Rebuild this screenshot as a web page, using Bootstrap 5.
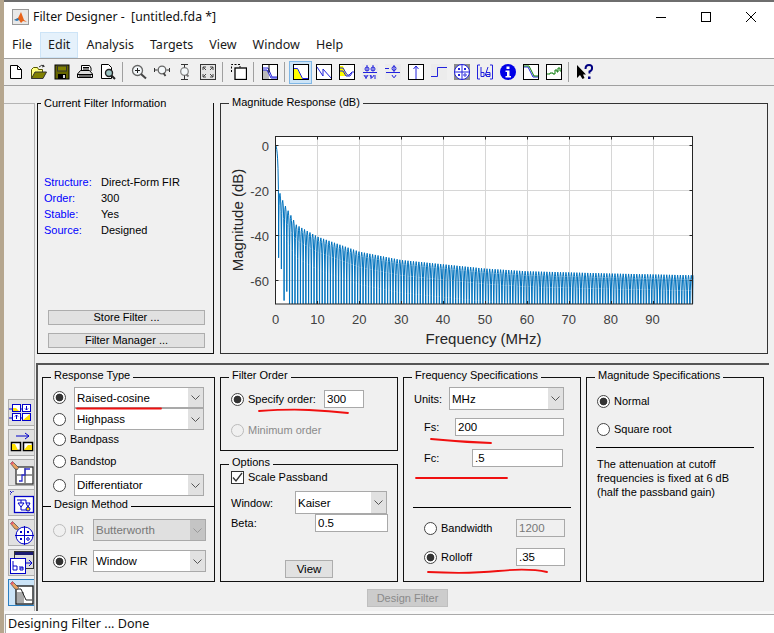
<!DOCTYPE html>
<html lang="en">
<head>
  <meta charset="UTF-8">
  <title>Filter Designer</title>
  <link rel="stylesheet" href="https://cdn.jsdelivr.net/npm/bootstrap@5.3.0/dist/css/bootstrap.min.css">
  <style>
    html, body { margin: 0; height: 633px; overflow: hidden; }
    body { background: #b5a68e; color: #000; font: 11px/14px "Liberation Sans", Arial, sans-serif; position: relative; }

    .fd-win { margin-left: 4px; width: 770px; height: 633px; background: #f0f0f0; }
    .fd-title { height: 32px; flex: none; background: #fff; border-top: 2px solid #6e6e6e; font: 12.3px/16px "Noto Sans", sans-serif; padding-left: 8px; gap: 4px; }
    .fd-title pre { margin: 0; font: inherit; color: #111; }
    .fd-winbtns { margin-left: auto; gap: 29px; padding-right: 15px; }
    .fd-menu { height: 26px; flex: none; background: #fff; font: 12.5px/24px "Noto Sans", sans-serif; color: #1a1a1a; }
    .fd-menu span { padding: 0 7px; height: 26px; border: 1px solid transparent; }
    .fd-menu span.on { background: #e5f1fb; border-color: #cde4f7; }

    .fd-tools { height: 28px; flex: none; border-top: 1px solid #a0a0a0; border-bottom: 1px solid #a0a0a0; }
    .fd-tool { width: 23px; height: 23px; }
    .fd-tool.on { background: #cce4f7; border: 1px solid #7fb7e6; }
    .fd-tool svg, .fd-side svg { display: block; }
    .fd-sep { width: 1px; height: 20px; background: #a0a0a0; margin: 0 4px 0 3px; }

    .fd-body { height: 525px; flex: none; }
    .fd-side { width: 31px; margin-top: 17px; border-top: 1px solid #b4b4b4; border-right: 1px solid #b4b4b4; padding: 295px 0 0 4px; gap: 3px; }
    .fd-sidebtn { width: 26px; height: 27px; background: #e1e1e1; border: 1px solid #adadad; border-right: 0; }
    .fd-sidebtn.on { background: #cce4f7; border: 1px solid #2b7fc0; border-right: 0; }
    .fd-right { width: 735px; }
    .fd-upper { height: 277px; padding: 17px 0 0 2px; gap: 6px; margin-right: -6px; }
    .fd-lower { width: 733px; height: 248px; border-top: 2px solid #555; border-left: 2px solid #555; margin-left: 1px; padding: 12px 0 0 4px; }
    .fd-gap-5 { gap: 5px; }

    .fd-pnl { border: 1px solid #111; position: relative; }
    .fd-pnl-info { width: 177px; height: 251px; }
    .fd-pnl-mag { width: 548px; height: 251px; border-color: #333; }
    .fd-pnl-resp { width: 173px; height: 205px; }
    .fd-pnl-order { width: 178px; height: 74px; }
    .fd-pnl-opts { width: 178px; height: 118px; margin-top: 13px; }
    .fd-pnl-freq { width: 178px; height: 205px; }
    .fd-pnl-spec { width: 178px; height: 205px; }
    .fd-cap { display: table; height: 14px; margin: -10px 0 -4px 8px; padding: 0 3px; background: #f0f0f0; white-space: nowrap; }
    .fd-pnl-info > .fd-cap { margin: -8px 0 -6px 3px; }
    .fd-pnl-mag > .fd-cap { margin: -9px 0 -5px 8px; }

    .fd-rad.form-check-input { width: 13px; height: 13px; margin: 0; flex: none; background: #fff; border: 1px solid #444; box-shadow: none; }
    .fd-rad.form-check-input:checked[type=radio] { background: radial-gradient(circle, #333 0 3.5px, #fff 4.2px); border-color: #444; }
    .fd-rad.form-check-input:disabled { opacity: 1; border-color: #bbb; background: #f0f0f0; }
    .fd-chk.form-check-input { width: 13px; height: 13px; margin: 0; flex: none; background: #fff; border: 1px solid #333; border-radius: 0; box-shadow: none; }
    .fd-chk.form-check-input:checked[type=checkbox] { background: #fff url("data:image/svg+xml,%3csvg xmlns='http://www.w3.org/2000/svg' viewBox='0 0 13 13'%3e%3cpath d='M2 6.5l3 3.5 6-8' fill='none' stroke='%23333' stroke-width='1.3'/%3e%3c/svg%3e") center/13px no-repeat; }

    .fd-fld.form-control { height: 18px; min-height: 0; padding: 0 2px; border: 1px solid #a9a9a9; border-radius: 0; font: 11.5px/16px "Liberation Sans", sans-serif; color: #000; box-shadow: none; flex: none; }
    .fd-fld.form-control:disabled { background: #f0f0f0; color: #777; }
    .fd-cmb.form-select { height: 22px; padding: 0 16px 0 2px; border: 1px solid #a9a9a9; border-radius: 0; font: 11.5px/20px "Liberation Sans", sans-serif; color: #000; box-shadow: none; flex: none;
      background: url("data:image/svg+xml,%3csvg xmlns='http://www.w3.org/2000/svg' width='9' height='5'%3e%3cpath d='M.5.5l4 4 4-4' fill='none' stroke='%23555'/%3e%3c/svg%3e") right 3px center no-repeat, linear-gradient(to left, #e1e1e1 15px, #fff 15px); }
    .fd-cmb.form-select:disabled { color: #777; background: url("data:image/svg+xml,%3csvg xmlns='http://www.w3.org/2000/svg' width='9' height='5'%3e%3cpath d='M.5.5l4 4 4-4' fill='none' stroke='%23999'/%3e%3c/svg%3e") right 3px center no-repeat, linear-gradient(to left, #c4c4c4 15px, #e0e0e0 15px); }

    .fd-w130 { width: 130px; } .fd-w113 { width: 113px; } .fd-w40 { width: 40px; } .fd-w92 { width: 92px; } .fd-w73 { width: 73px; }
    .fd-w115 { width: 115px; } .fd-w109 { width: 109px; } .fd-w91 { width: 91px; } .fd-w49 { width: 49px; }
    .fd-wl19 { width: 19px; } .fd-wl31 { width: 31px; } .fd-wl35 { width: 35px; } .fd-wl48 { width: 48px; } .fd-wl64 { width: 64px; } .fd-wl71 { width: 71px; } .fd-wl72 { width: 72px; } .fd-wl84 { width: 84px; } .fd-wl57 { width: 57px; }
    .fd-h18 { height: 18px; } .fd-h22 { height: 22px; } .fd-h21 { height: 21px; } .fd-h23 { height: 23px; } .fd-h16 { height: 16px; } .fd-h14 { height: 14px; }
    .fd-h21 .form-select { height: 21px; } .fd-h23 .form-select { height: 23px; }
    .fd-pl6 { padding-left: 6px; } .fd-pl10 { padding-left: 10px; } .fd-pl20 { padding-left: 20px; } .fd-g4 { gap: 4px; } .fd-g8 { gap: 8px; }
    .fd-mt4 { margin-top: 4px; } .fd-mt5 { margin-top: 5px; } .fd-mt7 { margin-top: 7px; } .fd-mt8 { margin-top: 8px; } .fd-mt9 { margin-top: 9px; }
    .fd-mt10 { margin-top: 10px; } .fd-mt11 { margin-top: 11px; } .fd-mt12 { margin-top: 12px; } .fd-mt13 { margin-top: 13px; } .fd-mt14 { margin-top: 14px; } .fd-mt71 { margin-top: 71px; }
    .fd-div { border-top: 1px solid #000; }
    .fd-div-freq { margin: 40px 9px 0 9px; }
    .fd-div-spec { margin: 9px 9px 0 9px; }
    .fd-blue { color: #00f; }
    .fd-gray { color: #8a8a8a; }
    .fd-note { padding: 9px 6px 0 10px; }

    .btn.fd-btn { padding: 0; border: 1px solid #adadad; border-radius: 0; background: #e1e1e1; color: #000; font: 11px/13px "Liberation Sans", sans-serif; }
    .btn.fd-btn-view { width: 48px; height: 18px; margin: 28px 0 0 54px; font-size: 11.5px; line-height: 16px; }
    .btn.fd-btn-design { display: block; width: 81px; height: 18px; margin: 7px 0 0 325px; background: #ccc; border-color: #bfbfbf; color: #8a8a8a; opacity: 1; line-height: 16px; }
    .fd-store { margin: auto 8px 5px 10px; gap: 8px; }
    .fd-store .btn { height: 15px; }

    .fd-strip { height: 3px; flex: none; background: #f8f8f8; }
    .fd-statbox { height: 19px; flex: none; background: #fff; border-top: 1px solid #aaa; border-left: 1px solid #aaa; margin-left: 1px; padding-left: 2px; font: 12.6px/18px "Noto Sans", sans-serif; color: #111; }

    .fd-marks { position: absolute; left: 0; top: 0; pointer-events: none; }
    #magChart { display: block; }
  </style>
</head>
<body>
<div class="fd-win d-flex flex-column">

  <!-- title bar -->
  <div class="fd-title d-flex align-items-center">
    <svg width="17" height="16" viewBox="0 0 17 16"><rect x=".5" y=".5" width="16" height="15" fill="#e8e8e8" stroke="#999"/><path d="M2 11l4-2 3-6 3 8 3 2-4-1-2 2-2-3z" fill="#e8641b"/><path d="M2 11l4-2 1 2-2 1z" fill="#2a7ab8"/></svg>
    <pre>Filter Designer -  [untitled.fda *]</pre>
    <div class="fd-winbtns d-flex align-items-center">
      <svg width="16" height="12" viewBox="0 0 16 12"><path d="M3 6.500h10" stroke="#000"/></svg>
      <svg width="16" height="12" viewBox="0 0 16 12"><rect x="3.500" y="1.500" width="9" height="9" fill="none" stroke="#000"/></svg>
      <svg width="16" height="12" viewBox="0 0 16 12"><path d="M3 1l10 10M13 1L3 11" stroke="#000"/></svg>
    </div>
  </div>

  <!-- menu bar -->
  <div class="fd-menu d-flex">
    <span>File</span><span class="on">Edit</span><span>Analysis</span><span>Targets</span><span>View</span><span>Window</span><span>Help</span>
  </div>

  <!-- toolbar -->
  <div class="fd-tools d-flex align-items-center">
    <div class="fd-tool d-flex align-items-center justify-content-center"><svg width="16" height="16" viewBox="0 0 16 16"><path d="M2.500 1.500h7l4 4v9h-11z" fill="#fff" stroke="#000"/><path d="M9.500 1.500v4h4" fill="none" stroke="#000"/></svg></div>
    <div class="fd-tool d-flex align-items-center justify-content-center"><svg width="16" height="16" viewBox="0 0 16 16"><path d="M.5 14.500v-9l2-2h4l1 2h4v3" fill="#ffff80" stroke="#555500"/><path d="M.5 14.500L4 8h11.500L12 14.500z" fill="#808000" stroke="#333"/><path d="M8 3q3-3 5-1" fill="none" stroke="#333"/><path d="M12 .5l2 2-3 1z" fill="#333"/></svg></div>
    <div class="fd-tool d-flex align-items-center justify-content-center"><svg width="16" height="16" viewBox="0 0 16 16"><rect x="1" y="1" width="14" height="14" fill="#666600" stroke="#000"/><rect x="3.500" y="2" width="9" height="5" fill="#808000" stroke="#333"/><rect x="4" y="10" width="8" height="5" fill="#000"/><rect x="9" y="11" width="2" height="3" fill="#ddd"/></svg></div>
    <div class="fd-tool d-flex align-items-center justify-content-center"><svg width="16" height="16" viewBox="0 0 16 16"><path d="M4.500 7V1.500h8L14 4v3" fill="#fff" stroke="#000"/><path d="M.5 10l3-3.500h9L15.500 10v3.500H.5z" fill="#ddd" stroke="#000"/><path d="M1 10.500h14M2 12h12M6 3.500h6M6 5h6" stroke="#000"/></svg></div>
    <div class="fd-tool d-flex align-items-center justify-content-center"><svg width="16" height="16" viewBox="0 0 16 16"><path d="M1.500 .5h7l3 3v11h-10z" fill="#fff" stroke="#000"/><circle cx="9" cy="9" r="3.500" fill="#9cc4c4" stroke="#222" stroke-width="1.400"/><path d="M11.500 11.500l3.500 3.500" stroke="#222" stroke-width="2"/></svg></div>
    <div class="fd-sep"></div>
    <div class="fd-tool d-flex align-items-center justify-content-center"><svg width="16" height="16" viewBox="0 0 16 16"><circle cx="6.500" cy="6.500" r="5" fill="#f4f8fa" stroke="#666" stroke-width="1.300"/><path d="M4 6.500h5M6.500 4v5" stroke="#222"/><path d="M10 10l5 4.500" stroke="#444" stroke-width="2"/></svg></div>
    <div class="fd-tool d-flex align-items-center justify-content-center"><svg width="16" height="16" viewBox="0 0 16 16"><circle cx="8" cy="6" r="3.800" fill="#f4f8fa" stroke="#666" stroke-width="1.300"/><path d="M9.500 9l2 3" stroke="#444" stroke-width="1.800"/><path d="M.5 4v4M15.500 4v4M1 6h2.500M12.500 6H15" stroke="#333"/></svg></div>
    <div class="fd-tool d-flex align-items-center justify-content-center"><svg width="16" height="16" viewBox="0 0 16 16"><circle cx="7.500" cy="7.500" r="3.800" fill="#f4f8fa" stroke="#888" stroke-width="1.300"/><path d="M9.500 10.500l2 2" stroke="#777" stroke-width="1.800"/><path d="M4 .5h7M4 15.500h7M7.500 1v2.500M7.500 11.500V15" stroke="#333"/></svg></div>
    <div class="fd-tool d-flex align-items-center justify-content-center"><svg width="16" height="16" viewBox="0 0 16 16"><rect x=".5" y=".5" width="15" height="15" fill="#e4e4e4" stroke="#333"/><path d="M6 3H3v3M10 3h3v3M6 13H3v-3M10 13h3v-3M3 3l3 3M13 3l-3 3M3 13l3-3M13 13l-3-3" fill="none" stroke="#444"/></svg></div>
    <div class="fd-sep"></div>
    <div class="fd-tool d-flex align-items-center justify-content-center"><svg width="16" height="16" viewBox="0 0 16 16"><path d="M.5 8V.5H9v3" fill="none" stroke="#000" stroke-dasharray="2 1.500"/><rect x="4" y="4" width="11.500" height="11.500" fill="#fff" stroke="#000" stroke-width="1.300"/></svg></div>
    <div class="fd-sep"></div>
    <div class="fd-tool d-flex align-items-center justify-content-center"><svg width="16" height="16" viewBox="0 0 16 16"><rect x=".5" y=".5" width="15" height="15" fill="#fff" stroke="#000"/><rect x="1" y="6" width="6" height="9" fill="#bbb"/><path d="M1 4h5l4 9h5M1 6h4l4 8h6" fill="none" stroke="#2222dd"/><path d="M7 .5v8" stroke="#000"/></svg></div>
    <div class="fd-sep"></div>
    <div class="fd-tool on d-flex align-items-center justify-content-center"><svg width="16" height="16" viewBox="0 0 16 16"><rect x=".5" y=".5" width="15" height="15" fill="#fff" stroke="#000"/><path d="M1 5h3.500l5 10H1z" fill="#ffff00"/><path d="M1 4.500h3.500l5 10h5.500" fill="none" stroke="#2222dd"/></svg></div>
    <div class="fd-tool d-flex align-items-center justify-content-center"><svg width="16" height="16" viewBox="0 0 16 16"><rect x=".5" y=".5" width="15" height="15" fill="#fff" stroke="#000"/><path d="M1 3l6 9V5l8 9" fill="none" stroke="#2222dd"/></svg></div>
    <div class="fd-tool d-flex align-items-center justify-content-center"><svg width="16" height="16" viewBox="0 0 16 16"><rect x=".5" y=".5" width="15" height="15" fill="#fff" stroke="#000"/><path d="M1 2h3l4 10h-7z" fill="#ffff00"/><path d="M1 4h3l3 5q2 4 4 1t4-2M1 7h3l3 5h4l2-3" fill="none" stroke="#2222dd"/></svg></div>
    <div class="fd-tool d-flex align-items-center justify-content-center"><svg width="16" height="16" viewBox="0 0 16 16"><rect width="16" height="16" fill="#ececec"/><path d="M1 8.500h14M5 1v6M11 1v6M4 11v4M9 11v4M13 11v4" stroke="#2222dd"/><circle cx="11" cy="5" r="2" fill="none" stroke="#2222dd"/><circle cx="5" cy="5" r="2" fill="none" stroke="#2222dd"/><path d="M2 11q2 5 4 0M8 11q2 5 4 0" fill="none" stroke="#2222dd"/></svg></div>
    <div class="fd-tool d-flex align-items-center justify-content-center"><svg width="16" height="16" viewBox="0 0 16 16"><rect width="16" height="16" fill="#ececec"/><path d="M0 4.500h4M1 8.500h14M9 1v7M7 11q2 5 4 0" fill="none" stroke="#2222dd"/><circle cx="9" cy="4.500" r="2" fill="none" stroke="#2222dd"/></svg></div>
    <div class="fd-tool d-flex align-items-center justify-content-center"><svg width="16" height="16" viewBox="0 0 16 16"><rect x=".5" y=".5" width="15" height="15" fill="#fff" stroke="#000"/><path d="M8 15V2M5.500 5L8 2l2.500 3" fill="none" stroke="#2222dd"/></svg></div>
    <div class="fd-tool d-flex align-items-center justify-content-center"><svg width="16" height="16" viewBox="0 0 16 16"><rect width="16" height="16" fill="#ececec"/><path d="M0 12.500h6.500v-9H16" fill="none" stroke="#2222dd"/></svg></div>
    <div class="fd-tool d-flex align-items-center justify-content-center"><svg width="16" height="16" viewBox="0 0 16 16"><rect width="16" height="16" fill="#8a8a8a"/><circle cx="8" cy="8" r="7.500" fill="#fff" stroke="#2222dd"/><path d="M8 0v16M0 8h16" stroke="#2222dd"/><path d="M4 4l2 2M6 4l-2 2M10 4l2 2M12 4l-2 2M4 10l2 2M6 10l-2 2" stroke="#2222dd"/><circle cx="11" cy="11" r="1.200" fill="none" stroke="#2222dd"/></svg></div>
    <div class="fd-tool d-flex align-items-center justify-content-center"><svg width="16" height="16" viewBox="0 0 16 16"><path d="M3 1H.5v14H3M13 1h2.500v14H13M4 3v9.500h3v-4H4M9 8.500h4V12.500H9.500V10.500H13M8 12l3-9" fill="none" stroke="#2222dd"/></svg></div>
    <div class="fd-tool d-flex align-items-center justify-content-center"><svg width="16" height="16" viewBox="0 0 16 16"><circle cx="8" cy="8" r="8" fill="#0000e6"/><rect x="6.500" y="2.500" width="3" height="2.500" fill="#fff"/><path d="M5.500 6.500h4v5.500h1.500v1.500H5.500V12H7V8H5.500z" fill="#fff"/></svg></div>
    <div class="fd-tool d-flex align-items-center justify-content-center"><svg width="16" height="16" viewBox="0 0 16 16"><rect x=".5" y=".5" width="15" height="15" fill="#fff" stroke="#000"/><path d="M1 3h4l5 10h5" fill="none" stroke="#2222dd"/><path d="M1 2h5l5 10h4" fill="none" stroke="#087a08"/></svg></div>
    <div class="fd-tool d-flex align-items-center justify-content-center"><svg width="16" height="16" viewBox="0 0 16 16"><rect x=".5" y=".5" width="15" height="15" fill="#fff" stroke="#000"/><path d="M1 10h3v-1h3v1h2V6h2v2h1V4h2v3h1" fill="none" stroke="#087a08"/></svg></div>
    <div class="fd-sep"></div>
    <div class="fd-tool d-flex align-items-center justify-content-center"><svg width="17" height="16" viewBox="0 0 17 16"><path d="M1 1v13l3-3 2.500 4 2-1L7 10.500h3z" fill="#000"/><path d="M9.500 5q0-4 3.500-4t3 3.500q0 2-2.500 3v2" fill="none" stroke="#000080" stroke-width="2"/><rect x="12" y="12.500" width="2.500" height="2.500" fill="#000080"/></svg></div>
  </div>

  <div class="fd-body d-flex">
    <!-- left mode buttons -->
    <div class="fd-side d-flex flex-column">
      <div class="fd-sidebtn"><svg width="25" height="25" viewBox="0 0 25 25"><g fill="#fff" stroke="#0000c8"><rect x="3.500" y="4.500" width="8" height="7"/><rect x="13.500" y="4.500" width="8" height="7"/><rect x="3.500" y="13.500" width="8" height="7"/><rect x="13.500" y="13.500" width="8" height="7"/></g><path d="M4 8h3l3 3H4zM14 20l7-6v6z" fill="#ffe000"/><path d="M17.500 6v4M16 8.500l1.500 1.500 1.500-1.500M7.500 19v-4M6 16.500l1.500-1.500 1.500 1.500M0 9h3M0 18h3M12 9h1M12 18h1" fill="none" stroke="#0000c8"/></svg></div>
      <div class="fd-sidebtn"><svg width="25" height="25" viewBox="0 0 25 25"><path d="M7 6h13M16 3l4 3-4 3" fill="none" stroke="#0000c8"/><g stroke="#000" stroke-width="1.500"><rect x="2.500" y="12.500" width="9" height="8" fill="#fff"/><rect x="14.500" y="12.500" width="9" height="8" fill="#fff"/></g><path d="M3 14h3l3 6H3zM15 20l4-5h4v5z" fill="#ffe000"/></svg></div>
      <div class="fd-sidebtn"><svg width="25" height="25" viewBox="0 0 25 25"><rect x="7" y="7" width="17" height="17" fill="#fff" stroke="#333" stroke-width="1.300"/><path d="M8 15h15M16 8v15" fill="none" stroke="#333"/><path d="M10 21h3v-6h3v-6h5" fill="none" stroke="#3030d0" stroke-width="1.300"/><path d="M1.500 3.500l2-2 6 6-1 2-2.500-.5z" fill="#e8a060" stroke="#444" stroke-width=".7"/><path d="M1.500 3.500l2-2 1.500 1.500-2 2z" fill="#e86070"/></svg></div>
      <div class="fd-sidebtn"><svg width="25" height="25" viewBox="0 0 25 25"><rect x="5.500" y="6.500" width="19" height="16" fill="#fff" stroke="#0000c8" stroke-width="1.300"/><path d="M1 1l2 2M4 1v1M1 4h1" stroke="#0000c8"/><path d="M8 10h9M12 10v3M17 10v3M9 13l3 4 3-4zM17 13l2 4 2-4zM12 17v3h7" fill="#fff" stroke="#0000c8"/><circle cx="19" cy="19" r="2" fill="#ffd400" stroke="#0000c8"/></svg></div>
      <div class="fd-sidebtn"><svg width="25" height="25" viewBox="0 0 25 25"><circle cx="15.500" cy="15.500" r="8.500" fill="#fff" stroke="#0000c8"/><path d="M15.500 6v19M6 15.500h19M11 11l2 2M13 11l-2 2M18 11l2 2M20 11l-2 2M11 18l2 2M13 18l-2 2" stroke="#0000c8"/><circle cx="19" cy="19" r="1.300" fill="none" stroke="#0000c8"/><path d="M1.500 3.500l2-2 6 6-1 2-2.500-.5z" fill="#e8a060" stroke="#444" stroke-width=".7"/><path d="M1.500 3.500l2-2 1.500 1.500-2 2z" fill="#e86070"/></svg></div>
      <div class="fd-sidebtn"><svg width="25" height="25" viewBox="0 0 25 25"><rect x="5.500" y="1.500" width="19" height="17" fill="#ddd" stroke="#333"/><rect x="6" y="2" width="18" height="3" fill="#1a1a70"/><rect x="1.500" y="8.500" width="15" height="15" fill="#fff" stroke="#0000c8"/><path d="M4 11v9h4v-4H4M10 17h4v3h-3v-2h3M17 13h6M20 10l3 3-3 3" fill="none" stroke="#0000c8"/></svg></div>
      <div class="fd-sidebtn on"><svg width="25" height="25" viewBox="0 0 25 25"><rect x="7" y="6" width="17" height="18" fill="#fff" stroke="#222" stroke-width="1.400"/><rect x="8" y="12" width="7" height="11" fill="#aaa"/><path d="M8 9h4l5 11h6" fill="none" stroke="#222"/><path d="M1.500 3.500l2-2 6 6-1 2-2.500-.5z" fill="#e8a060" stroke="#444" stroke-width=".7"/><path d="M1.500 3.500l2-2 1.500 1.500-2 2z" fill="#e86070"/></svg></div>
    </div>

    <div class="fd-right">
      <!-- upper: info and response plot -->
      <div class="fd-upper d-flex">
        <div class="fd-pnl fd-pnl-info d-flex flex-column">
          <div class="fd-cap">Current Filter Information</div>
          <div class="fd-mt71 fd-pl6">
            <div class="d-flex fd-h16"><span class="fd-blue fd-wl57">Structure:</span><span>Direct-Form FIR</span></div>
            <div class="d-flex fd-h16"><span class="fd-blue fd-wl57">Order:</span><span>300</span></div>
            <div class="d-flex fd-h16"><span class="fd-blue fd-wl57">Stable:</span><span>Yes</span></div>
            <div class="d-flex fd-h16"><span class="fd-blue fd-wl57">Source:</span><span>Designed</span></div>
          </div>
          <div class="fd-store d-grid">
            <button class="btn fd-btn">Store Filter ...</button>
            <button class="btn fd-btn">Filter Manager ...</button>
          </div>
        </div>
        <div class="fd-pnl fd-pnl-mag">
          <div class="fd-cap">Magnitude Response (dB)</div>
          <svg id="magChart" width="546" height="249" viewBox="221 104 546 249" font-family="Liberation Sans, Arial, sans-serif"></svg>
        </div>
      </div>

      <!-- lower: design controls -->
      <div class="fd-lower">
        <div class="d-flex fd-gap-5">
          <div class="fd-pnl fd-pnl-resp">
            <div class="fd-cap">Response Type</div>
            <div class="d-flex align-items-center fd-pl10 fd-g8 fd-h21 fd-mt9"><input class="form-check-input fd-rad" type="radio" name="rt" checked><select class="form-select fd-cmb fd-w130"><option>Raised-cosine</option></select></div>
            <div class="d-flex align-items-center fd-pl10 fd-g8 fd-h22"><input class="form-check-input fd-rad" type="radio" name="rt"><select class="form-select fd-cmb fd-w130"><option>Highpass</option></select></div>
            <div class="d-flex align-items-center fd-pl10 fd-g4 fd-h18"><input class="form-check-input fd-rad" type="radio" name="rt"><span>Bandpass</span></div>
            <div class="d-flex align-items-center fd-pl10 fd-g4 fd-h18 fd-mt4"><input class="form-check-input fd-rad" type="radio" name="rt"><span>Bandstop</span></div>
            <div class="d-flex align-items-center fd-pl10 fd-g8 fd-h22 fd-mt4"><input class="form-check-input fd-rad" type="radio" name="rt"><select class="form-select fd-cmb fd-w130"><option>Differentiator</option></select></div>
            <div class="fd-div fd-mt10">
              <div class="fd-cap">Design Method</div>
              <div class="d-flex align-items-center fd-pl10 fd-g4 fd-h22 fd-mt12"><input class="form-check-input fd-rad" type="radio" name="dm" disabled><span class="fd-wl19 fd-gray">IIR</span><select class="form-select fd-cmb fd-w113" disabled><option>Butterworth</option></select></div>
              <div class="d-flex align-items-center fd-pl10 fd-g4 fd-h22 fd-mt9"><input class="form-check-input fd-rad" type="radio" name="dm" checked><span class="fd-wl19">FIR</span><select class="form-select fd-cmb fd-w113"><option>Window</option></select></div>
            </div>
          </div>

          <div>
            <div class="fd-pnl fd-pnl-order">
              <div class="fd-cap">Filter Order</div>
              <div class="d-flex align-items-center fd-pl10 fd-g4 fd-h18 fd-mt12"><input class="form-check-input fd-rad" type="radio" name="fo" checked><span class="fd-wl72">Specify order:</span><input class="form-control fd-fld fd-w40" value="300"></div>
              <div class="d-flex align-items-center fd-pl10 fd-g4 fd-h18 fd-mt13"><input class="form-check-input fd-rad" type="radio" name="fo" disabled><span class="fd-gray">Minimum order</span></div>
            </div>
            <div class="fd-pnl fd-pnl-opts">
              <div class="fd-cap">Options</div>
              <div class="d-flex align-items-center fd-pl10 fd-g4 fd-h14 fd-mt5"><input class="form-check-input fd-chk" type="checkbox" checked><span>Scale Passband</span></div>
              <div class="d-flex align-items-center fd-pl10 fd-h23 fd-mt7"><span class="fd-wl64">Window:</span><select class="form-select fd-cmb fd-w92"><option>Kaiser</option></select></div>
              <div class="d-flex align-items-center fd-pl10 fd-h18"><span class="fd-wl84">Beta:</span><input class="form-control fd-fld fd-w73" value="0.5"></div>
              <div class="fd-pl10"><button class="btn fd-btn fd-btn-view">View</button></div>
            </div>
          </div>

          <div class="fd-pnl fd-pnl-freq">
            <div class="fd-cap">Frequency Specifications</div>
            <div class="d-flex align-items-center fd-pl10 fd-h23 fd-mt9"><span class="fd-wl35">Units:</span><select class="form-select fd-cmb fd-w115"><option>MHz</option></select></div>
            <div class="d-flex align-items-center fd-pl20 fd-h18 fd-mt8"><span class="fd-wl31">Fs:</span><input class="form-control fd-fld fd-w109" value="200"></div>
            <div class="d-flex align-items-center fd-pl20 fd-h18 fd-mt13"><span class="fd-wl48">Fc:</span><input class="form-control fd-fld fd-w91" value=".5"></div>
            <div class="fd-div fd-div-freq"></div>
            <div class="d-flex align-items-center fd-pl20 fd-g4 fd-h18 fd-mt11"><input class="form-check-input fd-rad" type="radio" name="bw"><span class="fd-wl71">Bandwidth</span><input class="form-control fd-fld fd-w49" value="1200" disabled></div>
            <div class="d-flex align-items-center fd-pl20 fd-g4 fd-h18 fd-mt11"><input class="form-check-input fd-rad" type="radio" name="bw" checked><span class="fd-wl71">Rolloff</span><input class="form-control fd-fld fd-w49" value=".35"></div>
          </div>

          <div class="fd-pnl fd-pnl-spec">
            <div class="fd-cap">Magnitude Specifications</div>
            <div class="d-flex align-items-center fd-pl10 fd-g4 fd-h18 fd-mt14"><input class="form-check-input fd-rad" type="radio" name="ms" checked><span>Normal</span></div>
            <div class="d-flex align-items-center fd-pl10 fd-g4 fd-h18 fd-mt10"><input class="form-check-input fd-rad" type="radio" name="ms"><span>Square root</span></div>
            <div class="fd-div fd-div-spec"></div>
            <div class="fd-note">The attenuation at cutoff<br>frequencies is fixed at 6 dB<br>(half the passband gain)</div>
          </div>
        </div>
        <button class="btn fd-btn fd-btn-design" disabled>Design Filter</button>
      </div>
    </div>
  </div>

  <div class="fd-strip"></div>
  <div class="fd-statbox">Designing Filter ... Done</div>
</div>

<!-- red hand drawn marks lie over the controls -->
<svg class="fd-marks" width="774" height="633" viewBox="0 0 774 633">
  <g fill="none" stroke="#f01010" stroke-width="1.800" stroke-linecap="round">
    <path d="M77 408.500h84"/>
    <path d="M259 411q30-2 50-1t39 3"/>
    <path d="M431 439q30 3 60 4"/>
    <path d="M416 478h91"/>
    <path d="M428 572q40 2 70-1t49 1"/>
  </g>
</svg>

<script>
  // draws the magnitude plot, coordinates are page pixels
  const X0 = 275.5, X1 = 692.5, Y0 = 136.5, Y1 = 304;
  const fx = f => X0 + f * 4.19;
  const dy = d => 145.3 - d * 2.25;
  const env = [[0.7,-19],[1,-21],[2,-25.8],[5,-35.4],[10,-40.6],[20,-47.3],[30,-51],[50,-54.8],[60,-56],[80,-57],[100,-57.8]];
  const NULLS = [-50, -55, -69, -65];

  function envelope(f) {
    for (let i = 1; i < env.length; i++) {
      if (f <= env[i][0]) {
        const t = (f - env[i-1][0]) / (env[i][0] - env[i-1][0]);
        return env[i-1][1] + t * (env[i][1] - env[i-1][1]);
      }
    }
    return env[env.length - 1][1];
  }

  let pts = [];
  for (let f = 0; f < 0.75; f += 0.1) {
    pts.push(fx(f).toFixed(2) + " " + dy(20 * Math.log10(Math.max(Math.cos(Math.PI * f / 1.5), 0.003))).toFixed(2));
  }
  // one lobe per null, a sample on each null so every spike reaches its depth
  for (let k = 0; 0.75 + k * 0.65 < 99.6; k++) {
    for (const t of [0, 0.06, 0.15, 0.3, 0.5, 0.7, 0.85, 0.94]) {
      const f = 0.75 + (k + t) * 0.65;
      let m = envelope(f) + 20 * Math.log10(Math.sin(Math.PI * t));
      if (t === 0) m = k < NULLS.length ? NULLS[k] : -90;
      pts.push(fx(f).toFixed(2) + " " + dy(m).toFixed(2));
    }
  }

  let s = `<rect x="${X0}" y="${Y0}" width="${X1-X0}" height="${Y1-Y0}" fill="#fff"/>`;
  let grid = "", ticks = "", labels = "";
  for (let v = 10; v <= 90; v += 10) {
    const x = Math.round(fx(v)) + 0.5;
    grid += `M${x} ${Y0}V${Y1}`;
    ticks += `M${x} ${Y0}v3M${x} ${Y1}v-3`;
  }
  for (let v = 0; v >= -60; v -= 20) {
    const y = Math.round(dy(v)) + 0.5;
    grid += `M${X0} ${y}H${X1}`;
    ticks += `M${X0} ${y}h3M${X1} ${y}h-3`;
    labels += `<text x="269" y="${y + 5}" text-anchor="end">${v}</text>`;
  }
  for (let v = 0; v <= 90; v += 10) {
    labels += `<text x="${fx(v)}" y="324" text-anchor="middle">${v}</text>`;
  }
  s += `<path d="${grid}" stroke="#d6d6d6" fill="none"/>`;
  s += `<clipPath id="axClip"><rect x="${X0}" y="${Y0}" width="${X1-X0+1}" height="${Y1-Y0}"/></clipPath>`;
  s += `<path clip-path="url(#axClip)" d="M${pts.join("L")}" stroke="#0072bd" stroke-width="1" fill="none"/>`;
  s += `<rect x="${X0}" y="${Y0}" width="${X1-X0}" height="${Y1-Y0}" fill="none" stroke="#262626"/>`;
  s += `<path d="${ticks}" stroke="#262626" fill="none"/>`;
  s += `<g font-size="13" fill="#404040">${labels}</g>`;
  s += `<text x="483.500" y="344" font-size="15" fill="#262626" text-anchor="middle">Frequency (MHz)</text>`;
  s += `<text transform="translate(243 220) rotate(-90)" font-size="15" fill="#262626" text-anchor="middle">Magnitude (dB)</text>`;
  document.getElementById("magChart").innerHTML = s;
</script>
<script src="https://cdn.jsdelivr.net/npm/bootstrap@5.3.0/dist/js/bootstrap.bundle.min.js"></script>
</body>
</html>
